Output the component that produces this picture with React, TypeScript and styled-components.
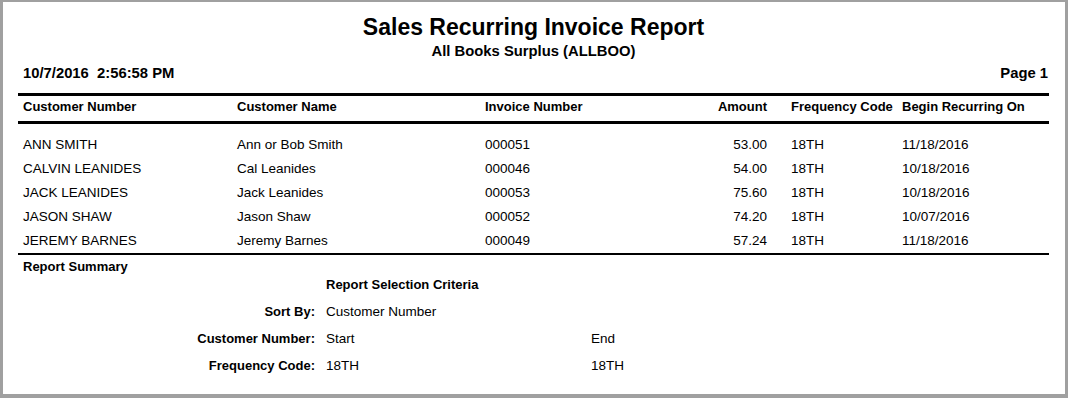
import React from 'react'
import styled, { createGlobalStyle } from 'styled-components'

type Row = {
  number: string
  name: string
  invoice: string
  amount: string
  frequency: string
  begin: string
}

const rows: Row[] = [
  { number: 'ANN SMITH', name: 'Ann or Bob Smith', invoice: '000051', amount: '53.00', frequency: '18TH', begin: '11/18/2016' },
  { number: 'CALVIN LEANIDES', name: 'Cal Leanides', invoice: '000046', amount: '54.00', frequency: '18TH', begin: '10/18/2016' },
  { number: 'JACK LEANIDES', name: 'Jack Leanides', invoice: '000053', amount: '75.60', frequency: '18TH', begin: '10/18/2016' },
  { number: 'JASON SHAW', name: 'Jason Shaw', invoice: '000052', amount: '74.20', frequency: '18TH', begin: '10/07/2016' },
  { number: 'JEREMY BARNES', name: 'Jeremy Barnes', invoice: '000049', amount: '57.24', frequency: '18TH', begin: '11/18/2016' },
]

const criteria = [
  { label: 'Sort By:', start: 'Customer Number', end: '' },
  { label: 'Customer Number:', start: 'Start', end: 'End' },
  { label: 'Frequency Code:', start: '18TH', end: '18TH' },
]

const App = () => {
  return (
    <>
      <GlobalStyle />
      <Page>
        <Title>Sales Recurring Invoice Report</Title>
        <Subtitle>All Books Surplus (ALLBOO)</Subtitle>
        <MetaBar>
          <MetaText>10/7/2016{'\u00a0'} 2:56:58 PM</MetaText>
          <MetaText>Page 1</MetaText>
        </MetaBar>
        <Rule $size={3} $top={11} />
        <HeaderRow>
          <HeadCell>Customer Number</HeadCell>
          <HeadCell>Customer Name</HeadCell>
          <HeadCell>Invoice Number</HeadCell>
          <HeadCell $right>Amount</HeadCell>
          <HeadCell $shift>Frequency Code</HeadCell>
          <HeadCell>Begin Recurring On</HeadCell>
        </HeaderRow>
        <Rule $size={3} $top={0} />
        <Body>
          {rows.map((r) => (
            <DataRow key={r.invoice}>
              <Cell>{r.number}</Cell>
              <Cell>{r.name}</Cell>
              <Cell>{r.invoice}</Cell>
              <Cell $right>{r.amount}</Cell>
              <Cell $shift>{r.frequency}</Cell>
              <Cell>{r.begin}</Cell>
            </DataRow>
          ))}
        </Body>
        <Rule $size={2} $top={0} />
        <SummaryTitle>Report Summary</SummaryTitle>
        <CriteriaTitle>Report Selection Criteria</CriteriaTitle>
        <Criteria>
          {criteria.map((c) => (
            <React.Fragment key={c.label}>
              <CriteriaLabel>{c.label}</CriteriaLabel>
              <CriteriaValue>{c.start}</CriteriaValue>
              <CriteriaEnd>{c.end}</CriteriaEnd>
            </React.Fragment>
          ))}
        </Criteria>
      </Page>
    </>
  )
}

export default App

const GlobalStyle = createGlobalStyle`
  body {
    margin: 0;
    background: #fff;
    font-family: "Liberation Sans", Arial, sans-serif;
    color: #000;
  }
`

const Page = styled.div`
  box-sizing: border-box;
  width: 1068px;
  height: 398px;
  border-style: solid;
  border-color: #a0a0a0;
  border-width: 2px 3px 4px 3px;
  padding: 12px 16px 0 15px;
  display: flex;
  flex-direction: column;
  overflow: hidden;
`

const Title = styled.div`
  font-size: 23px;
  line-height: 26px;
  font-weight: bold;
  text-align: center;
`

const Subtitle = styled.div`
  margin-top: 2px;
  font-size: 14.8px;
  line-height: 18px;
  font-weight: bold;
  text-align: center;
`

const MetaBar = styled.div`
  margin-top: 4px;
  padding: 0 1px 0 5px;
  display: flex;
  justify-content: space-between;
`

const MetaText = styled.div`
  font-size: 14.8px;
  line-height: 18px;
  font-weight: bold;
`

const Rule = styled.div<{ $size: number; $top: number }>`
  height: ${(p) => p.$size}px;
  margin-top: ${(p) => p.$top}px;
  background: #000;
`

const columns = '214px 248px 210px 72px 135px 1fr'

const HeaderRow = styled.div`
  display: grid;
  grid-template-columns: ${columns};
  padding: 3px 0 6px 5px;
`

const HeadCell = styled.div<{ $right?: boolean; $shift?: boolean }>`
  font-size: 13px;
  line-height: 16px;
  font-weight: bold;
  white-space: nowrap;
  text-align: ${(p) => (p.$right ? 'right' : 'left')};
  padding-left: ${(p) => (p.$shift ? '24px' : '0')};
`

const Body = styled.div`
  padding-top: 9px;
`

const DataRow = styled.div`
  display: grid;
  grid-template-columns: ${columns};
  padding-left: 5px;
  height: 24px;
  align-items: center;
`

const Cell = styled.div<{ $right?: boolean; $shift?: boolean }>`
  font-size: 13.5px;
  line-height: 16px;
  white-space: nowrap;
  text-align: ${(p) => (p.$right ? 'right' : 'left')};
  padding-left: ${(p) => (p.$shift ? '24px' : '0')};
`

const SummaryTitle = styled.div`
  margin-top: 4px;
  padding-left: 5px;
  font-size: 13px;
  line-height: 16px;
  font-weight: bold;
`

const CriteriaTitle = styled.div`
  margin-top: 2px;
  padding-left: 308px;
  font-size: 13px;
  line-height: 16px;
  font-weight: bold;
`

const Criteria = styled.div`
  margin-top: 5px;
  display: grid;
  grid-template-columns: 297px 276px 1fr;
  grid-auto-rows: 27px;
  align-items: center;
`

const CriteriaLabel = styled.div`
  font-size: 13px;
  line-height: 16px;
  font-weight: bold;
  text-align: right;
  white-space: nowrap;
`

const CriteriaValue = styled.div`
  padding-left: 11px;
  font-size: 13.5px;
  line-height: 16px;
  white-space: nowrap;
`

const CriteriaEnd = styled(CriteriaValue)`
  padding-left: 0;
`
